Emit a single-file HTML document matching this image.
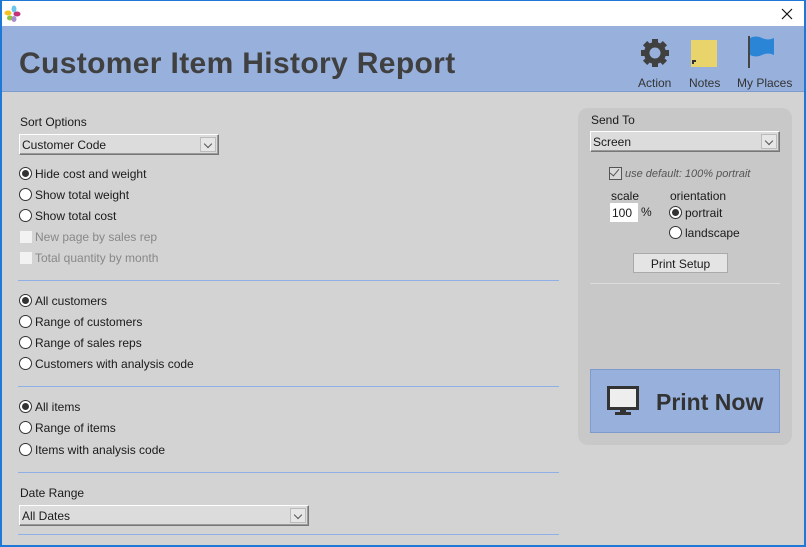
<!DOCTYPE html>
<html><head><meta charset="utf-8"><style>
*{margin:0;padding:0;box-sizing:border-box}
body{width:806px;height:547px;position:relative;overflow:hidden;background:#d3d3d3;font-family:"Liberation Sans",sans-serif;font-size:12px;color:#1a1a1a}
.a{position:absolute;white-space:nowrap}
.r{position:absolute;width:13px;height:13px;border:1px solid #333;border-radius:50%;background:#fff}
.r.on::after{content:"";position:absolute;left:2px;top:2px;width:7px;height:7px;border-radius:50%;background:#333}
.cb{position:absolute;width:12px;height:12px;background:#f2f2f2}
.sep{position:absolute;left:18px;width:541px;height:1px;background:#8fb0e6}
.dd{position:absolute;height:21px;background:#dcdcdc;border:1px solid #777;border-top-color:#fff;border-left-color:#fff;box-shadow:inset -1px -1px 0 #999}
.dd span{position:absolute;left:2px;top:3px}
.dd i{position:absolute;right:2px;top:2px;width:16px;height:15px;background:#e6e6e6;border:1px solid #bbb}
.dd i::after{content:"";position:absolute;left:4px;top:3px;width:5px;height:5px;border-right:1px solid #555;border-bottom:1px solid #555;transform:rotate(45deg)}
</style></head><body>
<div class="a" style="left:0;top:0;width:806px;height:547px;border:1px solid #1e78d6;border-bottom:2px solid #1e78d6;border-left-width:2px;border-right-width:2px"></div>
<div class="a" style="left:2px;top:1px;width:802px;height:25px;background:#fff"></div>
<svg class="a" style="left:4px;top:5px" width="18" height="18" viewBox="0 0 18 18">
<ellipse cx="10" cy="4" rx="2.5" ry="3.5" fill="#6cc7ea"/><ellipse cx="4" cy="8" rx="3.5" ry="2.5" fill="#f4c21e"/><ellipse cx="13" cy="9" rx="3.5" ry="2.5" fill="#c4307a"/><ellipse cx="6" cy="13" rx="3" ry="2.5" fill="#8cc43e"/><ellipse cx="10" cy="14" rx="2.5" ry="3" fill="#a98bd0"/></svg>
<svg class="a" style="left:781px;top:8px" width="12" height="12" viewBox="0 0 12 12"><path d="M1 1L11 11M11 1L1 11" stroke="#111" stroke-width="1.2"/></svg>
<div class="a" style="left:2px;top:26px;width:802px;height:66px;background:#97b0dc;border-bottom:1px solid #7e9bd0"></div>
<div class="a" style="left:19px;top:47px;font-size:30px;font-weight:bold;color:#404040;letter-spacing:0.35px">Customer Item History Report</div>
<svg class="a" style="left:639px;top:37px" width="32" height="32" viewBox="0 0 32 32"><g fill="#404040"><circle cx="16" cy="16" r="11"/><rect x="13" y="2" width="6" height="28"/><rect x="13" y="2" width="6" height="28" transform="rotate(45 16 16)"/><rect x="13" y="2" width="6" height="28" transform="rotate(90 16 16)"/><rect x="13" y="2" width="6" height="28" transform="rotate(135 16 16)"/></g><circle cx="16" cy="16" r="5.5" fill="#97b0dc"/></svg>
<div class="a" style="left:691px;top:40px;width:26px;height:27px;background:#e8d46a"></div>
<div class="a" style="left:692px;top:60px;width:4px;height:4px;border-left:2px solid #333;border-top:2px solid #333"></div>
<div class="a" style="left:748px;top:36px;width:2px;height:32px;background:#444"></div>
<svg class="a" style="left:750px;top:36px" width="26" height="22" viewBox="0 0 26 22"><path d="M0 2 Q6 -1 12 2 T24 2 L24 19 Q18 16 12 19 T0 19Z" fill="#2a85d6"/></svg>
<div class="a" style="left:638px;top:76px;color:#333">Action</div>
<div class="a" style="left:689px;top:76px;color:#333">Notes</div>
<div class="a" style="left:737px;top:76px;color:#333">My Places</div>

<div class="a" style="left:20px;top:115px">Sort Options</div>
<div class="dd" style="left:19px;top:134px;width:200px"><span>Customer Code</span><i></i></div>
<div class="r on" style="left:19px;top:167px"></div><div class="a" style="left:35px;top:167px">Hide cost and weight</div>
<div class="r" style="left:19px;top:188px"></div><div class="a" style="left:35px;top:188px">Show total weight</div>
<div class="r" style="left:19px;top:209px"></div><div class="a" style="left:35px;top:209px">Show total cost</div>
<div class="cb" style="left:20px;top:231px"></div><div class="a" style="left:35px;top:230px;color:#888">New page by sales rep</div>
<div class="cb" style="left:20px;top:252px"></div><div class="a" style="left:35px;top:251px;color:#888">Total quantity by month</div>
<div class="sep" style="top:280px"></div>
<div class="r on" style="left:19px;top:294px"></div><div class="a" style="left:35px;top:294px">All customers</div>
<div class="r" style="left:19px;top:315px"></div><div class="a" style="left:35px;top:315px">Range of customers</div>
<div class="r" style="left:19px;top:336px"></div><div class="a" style="left:35px;top:336px">Range of sales reps</div>
<div class="r" style="left:19px;top:357px"></div><div class="a" style="left:35px;top:357px">Customers with analysis code</div>
<div class="sep" style="top:386px"></div>
<div class="r on" style="left:19px;top:400px"></div><div class="a" style="left:35px;top:400px">All items</div>
<div class="r" style="left:19px;top:421px"></div><div class="a" style="left:35px;top:421px">Range of items</div>
<div class="r" style="left:19px;top:443px"></div><div class="a" style="left:35px;top:443px">Items with analysis code</div>
<div class="sep" style="top:472px"></div>
<div class="a" style="left:20px;top:486px">Date Range</div>
<div class="dd" style="left:19px;top:505px;width:290px"><span>All Dates</span><i></i></div>
<div class="sep" style="top:534px"></div>

<div class="a" style="left:578px;top:108px;width:214px;height:337px;background:#c8c8c8;border-radius:10px"></div>
<div class="a" style="left:591px;top:113px">Send To</div>
<div class="dd" style="left:590px;top:131px;width:190px"><span>Screen</span><i></i></div>
<div class="a" style="left:609px;top:167px;width:13px;height:13px;border:1px solid #555;background:#d8d8d8"></div>
<div class="a" style="left:612px;top:167px;width:5px;height:9px;border-right:1.5px solid #555;border-bottom:1.5px solid #555;transform:rotate(40deg)"></div>
<div class="a" style="left:625px;top:168px;font-size:11px;font-style:italic;color:#555">use default: 100% portrait</div>
<div class="a" style="left:611px;top:189px">scale</div>
<div class="a" style="left:670px;top:189px">orientation</div>
<div class="a" style="left:610px;top:203px;width:28px;height:19px;background:#fff;padding:3px 0 0 2px">100</div>
<div class="a" style="left:641px;top:205px">%</div>
<div class="r on" style="left:669px;top:206px"></div><div class="a" style="left:685px;top:206px">portrait</div>
<div class="r" style="left:669px;top:226px"></div><div class="a" style="left:685px;top:226px">landscape</div>
<div class="a" style="left:633px;top:253px;width:95px;height:20px;background:#e4e4e4;border:1px solid #aaa;text-align:center;padding-top:3px">Print Setup</div>
<div class="a" style="left:590px;top:283px;width:190px;height:1px;background:#ddd"></div>
<div class="a" style="left:590px;top:369px;width:190px;height:64px;background:#97b0dc;border:1px solid #7f9acc"></div>
<svg class="a" style="left:607px;top:386px" width="32" height="30" viewBox="0 0 32 30"><rect x="1.5" y="1.5" width="29" height="21" fill="#eee" stroke="#333" stroke-width="3"/><rect x="13" y="23" width="6" height="4" fill="#333"/><rect x="8" y="26" width="16" height="3" fill="#333"/></svg>
<div class="a" style="left:656px;top:389px;font-size:23px;font-weight:bold;color:#333">Print Now</div>
</body></html>
